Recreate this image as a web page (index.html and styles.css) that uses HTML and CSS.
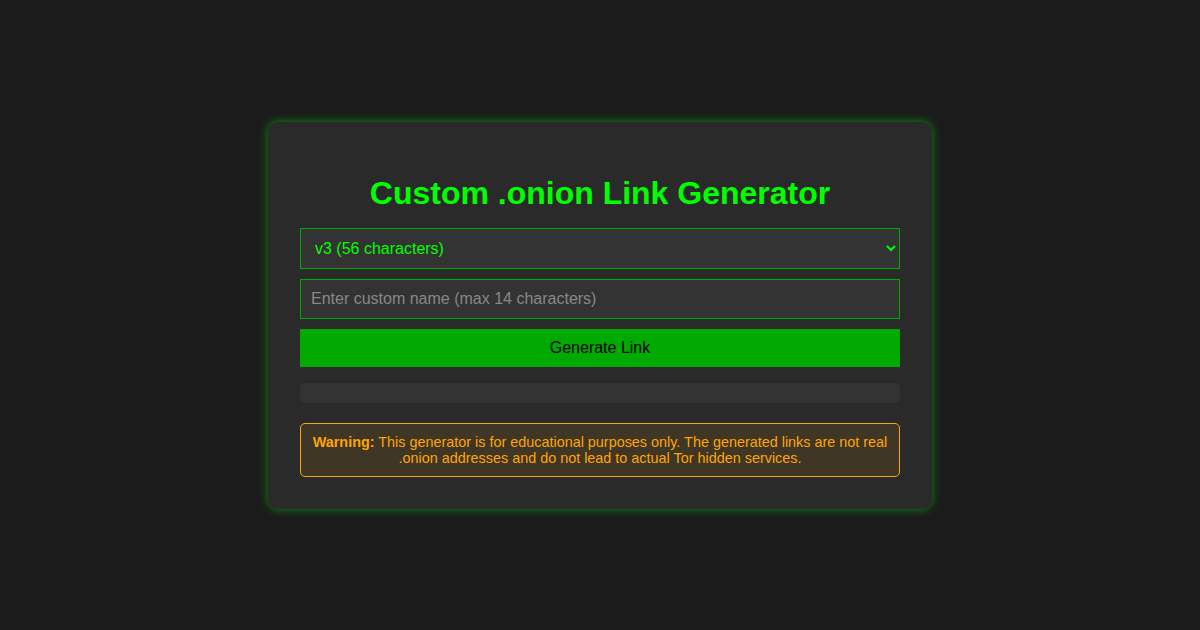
FILE: index.html
```html
<!doctype html>
<html lang="en">
<head>
    <meta charset="UTF-8">
    <meta name="viewport" content="width=device-width, initial-scale=1.0">
    <title>Custom .onion Link Generator</title>
    <link rel="stylesheet" href="styles.css">
</head>
<body>
<div class="container">
    <h1>Custom .onion Link Generator</h1>
    <select id="version">
        <option value="v3">v3 (56 characters)</option>
        <option value="v2">v2 (16 characters)</option>
    </select>
    <input type="text" id="custom-name" placeholder="Enter custom name (max 14 characters)">
    <button id="generate">Generate Link</button>
    <div class="result" id="result"></div>
    <div class="warning">
        <strong>Warning:</strong> This generator is for educational purposes only. The generated links are not real .onion addresses and do not lead to actual Tor hidden services.
    </div>
</div>
</body>
</html>
```

FILE: styles.css
```css
body {
    font-family: "Liberation Sans", Arial, sans-serif;
    display: flex;
    justify-content: center;
    align-items: center;
    height: 100vh;
    margin: 0;
    background-color: #1b1b1b;
    color: #0f0;
}

.container {
    width: 600px;
    padding: 32px;
    background-color: #2a2a2a;
    border-radius: 10px;
    box-shadow: 0 0 10px rgba(0, 255, 0, 0.5);
    display: flex;
    flex-direction: column;
}

h1 {
    font-size: 32px;
    text-align: center;
    margin: 21px 0 16px;
    color: #0f0;
}

select, input, button {
    font-family: inherit;
    font-size: 16px;
    box-sizing: border-box;
    width: 100%;
}

select {
    height: 41px;
    padding: 0 10px;
    margin-bottom: 10px;
    background-color: #333;
    color: #0f0;
    border: 1px solid #0a0;
}

input {
    height: 40px;
    padding: 0 10px;
    margin-bottom: 10px;
    background-color: #333;
    color: #0f0;
    border: 1px solid #0a0;
}

input::placeholder {
    color: #888;
}

button {
    height: 38px;
    background-color: #0a0;
    color: #000;
    border: none;
    cursor: pointer;
}

.result {
    margin-top: 16px;
    height: 20px;
    background-color: #333;
    border-radius: 5px;
}

.warning {
    margin-top: 20px;
    padding: 10px;
    border: 1px solid #ffa500;
    border-radius: 5px;
    background-color: rgba(255, 165, 0, 0.1);
    color: #ffa500;
    font-size: 0.9em;
    line-height: 16px;
    text-align: center;
}
```
